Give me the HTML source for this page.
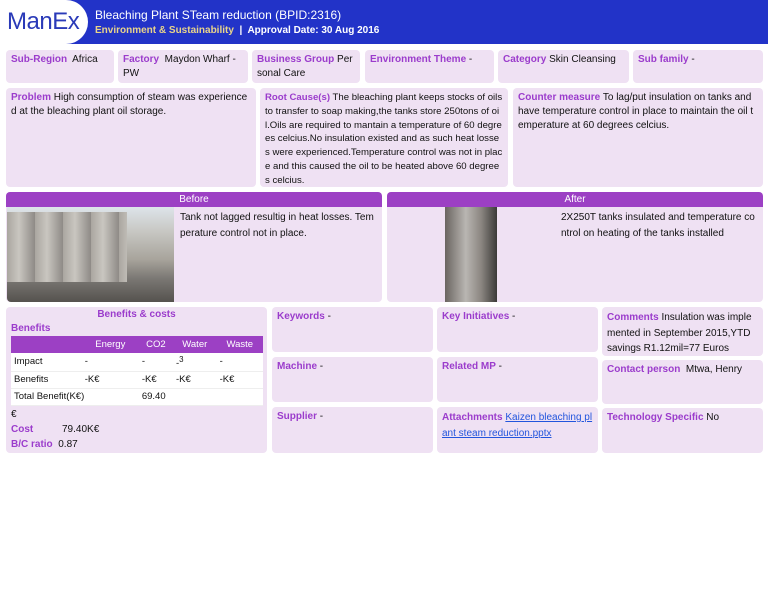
<!DOCTYPE html>
<html><head><meta charset="utf-8"><style>
*{box-sizing:border-box;margin:0;padding:0}
body{width:768px;height:594px;background:#fff;font-family:"Liberation Sans",sans-serif;font-size:10px;color:#111;position:relative;overflow:hidden}
.hdr{position:absolute;left:0;top:0;width:768px;height:44px;background:#2233c8}
.logo{position:absolute;left:0;top:0;width:88px;height:44px;background:#fff;border-radius:0 22px 22px 0;color:#2a3ab8;font-size:24px;line-height:44px;padding-left:7px;letter-spacing:-0.5px}
.t1{position:absolute;left:95px;top:8px;color:#fff;font-size:12px}
.t2{position:absolute;left:95px;top:25px;color:#fff;font-size:10px;font-weight:bold}
.t2 span{color:#e9d58a}
.c{position:absolute;background:#efe1f3;border-radius:4px;padding:3px 5px;line-height:14px;word-break:break-all}
.l{color:#9b3ccc;font-weight:bold}
.bar{position:absolute;height:15px;background:#9c40c4;color:#fff;text-align:center;font-size:10px;line-height:15px;border-radius:4px 4px 0 0}
table{border-collapse:collapse;width:252px;position:absolute;left:5px;top:29px;font-size:9.5px}
th{background:#9c40c4;color:#fff;font-weight:normal;height:17px}
td{background:#fff;height:17px;border-bottom:1px solid #eee;padding-left:3px}
a{color:#2255dd;text-decoration:underline}
</style></head><body>
<div class="hdr"></div>
<div class="logo">ManEx</div>
<div class="t1">Bleaching Plant STeam reduction (BPID:2316)</div>
<div class="t2"><span>Environment &amp; Sustainability</span> &nbsp;|&nbsp; Approval Date: 30 Aug 2016</div>

<div class="c" style="left:6px;top:50px;width:108px;height:33px"><span class="l">Sub-Region</span>&nbsp; Africa</div>
<div class="c" style="left:118px;top:50px;width:130px;height:33px"><span class="l">Factory</span>&nbsp; Maydon Wharf - PW</div>
<div class="c" style="left:252px;top:50px;width:108px;height:33px"><span class="l">Business Group</span> Personal Care</div>
<div class="c" style="left:365px;top:50px;width:129px;height:33px"><span class="l">Environment Theme</span> -</div>
<div class="c" style="left:498px;top:50px;width:131px;height:33px"><span class="l">Category</span> Skin Cleansing</div>
<div class="c" style="left:633px;top:50px;width:130px;height:33px"><span class="l">Sub family</span> -</div>

<div class="c" style="left:6px;top:88px;width:250px;height:99px"><span class="l">Problem</span> High consumption of steam was experienced at the bleaching plant oil storage.</div>
<div class="c" style="left:260px;top:88px;width:248px;height:99px;font-size:9.6px;line-height:13.8px"><span class="l">Root Cause(s)</span> The bleaching plant keeps stocks of oils to transfer to soap making,the tanks store 250tons of oil.Oils are required to mantain a temperature of 60 degrees celcius.No insulation existed and as such heat losses were experienced.Temperature control was not in place and this caused the oil to be heated above 60 degrees celcius.</div>
<div class="c" style="left:513px;top:88px;width:250px;height:99px"><span class="l">Counter measure</span> To lag/put insulation on tanks and have temperature control in place to maintain the oil temperature at 60 degrees celcius.</div>

<div class="c" style="left:6px;top:192px;width:376px;height:110px"></div>
<div class="bar" style="left:6px;top:192px;width:376px">Before</div>
<div style="position:absolute;left:7px;top:207px;width:167px;height:95px;background:linear-gradient(180deg,#dde4ea 0%,#c8c8c4 25%,#a8a49c 55%,#7b7874 75%,#55524e 100%);border-radius:0 0 0 4px"></div>
<div style="position:absolute;left:7px;top:212px;width:120px;height:70px;background:repeating-linear-gradient(90deg,#aaa6a0 0,#c9c6c0 12px,#8e8a86 28px)"></div>
<div style="position:absolute;left:180px;top:210px;width:198px;line-height:16px;word-break:break-all">Tank not lagged resultig in heat losses. Temperature control not in place.</div>

<div class="c" style="left:387px;top:192px;width:376px;height:110px"></div>
<div class="bar" style="left:387px;top:192px;width:376px">After</div>
<div style="position:absolute;left:445px;top:207px;width:52px;height:95px;background:linear-gradient(90deg,#6a6460 0%,#b9b6b2 40%,#8a8580 70%,#3b3a38 100%)"></div>
<div style="position:absolute;left:561px;top:210px;width:198px;line-height:16px;word-break:break-all">2X250T tanks insulated and temperature control on heating of the tanks installed</div>

<div class="c" style="left:6px;top:307px;width:261px;height:146px;padding:0">
<div class="l" style="position:absolute;left:0;width:261px;text-align:center;top:1px">Benefits &amp; costs</div>
<div class="l" style="position:absolute;left:5px;top:15px">Benefits</div>
<table><tr><th></th><th>Energy</th><th>CO2</th><th>Water</th><th>Waste</th></tr>
<tr><td>Impact</td><td>-</td><td>-</td><td>-<sup>3</sup></td><td>-</td></tr>
<tr><td>Benefits</td><td>-K€</td><td>-K€</td><td>-K€</td><td>-K€</td></tr>
<tr><td colspan="2">Total Benefit(K€)</td><td colspan="3">69.40</td></tr></table>
<div style="position:absolute;left:5px;top:101px">€</div>
<div style="position:absolute;left:5px;top:116px"><span class="l">Cost</span><span style="position:absolute;left:51px;white-space:nowrap">79.40K€</span></div>
<div style="position:absolute;left:5px;top:131px;white-space:nowrap"><span class="l">B/C ratio</span>&nbsp; 0.87</div>
</div>

<div class="c" style="left:272px;top:307px;width:161px;height:45px"><span class="l">Keywords</span> -</div>
<div class="c" style="left:272px;top:357px;width:161px;height:45px"><span class="l">Machine</span> -</div>
<div class="c" style="left:272px;top:407px;width:161px;height:46px"><span class="l">Supplier</span> -</div>
<div class="c" style="left:437px;top:307px;width:161px;height:45px"><span class="l">Key Initiatives</span> -</div>
<div class="c" style="left:437px;top:357px;width:161px;height:45px"><span class="l">Related MP</span> -</div>
<div class="c" style="left:437px;top:407px;width:161px;height:46px;line-height:16px"><span class="l">Attachments</span> <a>Kaizen bleaching plant steam reduction.pptx</a></div>
<div class="c" style="left:602px;top:307px;width:161px;height:49px;line-height:15.5px"><span class="l">Comments</span> Insulation was implemented in September 2015,YTD savings R1.12mil=77 Euros</div>
<div class="c" style="left:602px;top:360px;width:161px;height:44px"><span class="l">Contact person</span>&nbsp; Mtwa, Henry</div>
<div class="c" style="left:602px;top:408px;width:161px;height:45px"><span class="l">Technology Specific</span> No</div>
</body></html>
